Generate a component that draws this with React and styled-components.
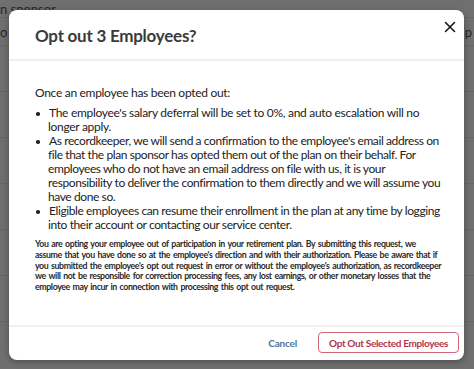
import React from "react"
import styled, { createGlobalStyle } from "styled-components"

const GlobalStyle = createGlobalStyle`
  html, body {
    margin: 0;
    padding: 0;
    background: #6e6e6e;
    font-family: "Lato", "Noto Sans", sans-serif;
  }
  * { box-sizing: border-box; }
`

const Page = styled.div`
  position: relative;
  width: 474px;
  height: 369px;
  overflow: hidden;
  background: #6f6f6f;
`

const Backdrop = styled.div`
  color: #262626;
  font-size: 13px;
  line-height: 14px;
`

const BackRow = styled.div`
  display: flex;
  justify-content: space-between;
  align-items: center;
  height: ${(p) => p.$h || 46}px;
  padding: 0 2px 0 0;
  border-bottom: 1px solid #666;
`

const Overlay = styled.div`
  position: absolute;
  inset: 0;
  padding: 10px 10px 9px 9px;
`

const Modal = styled.div`
  display: flex;
  flex-direction: column;
  height: 100%;
  background: #fff;
  border-radius: 8px;
  box-shadow: 0 2px 6px rgba(0, 0, 0, 0.3);
  overflow: hidden;
`

const Header = styled.div`
  display: flex;
  align-items: flex-start;
  justify-content: space-between;
  padding: 11px 8px 0 26px;
  height: 51px;
  border-bottom: 2px solid #f0f0f0;
`

const Title = styled.h2`
  margin: 5px 0 0;
  font-size: 17px;
  font-weight: 700;
  letter-spacing: -0.25px;
  color: #3b3b3b;
  line-height: 20px;
`

const CloseButton = styled.button`
  border: 0;
  background: none;
  padding: 0;
  width: 12px;
  height: 12px;
  cursor: pointer;
  svg { display: block; }
`

const Body = styled.div`
  flex: 1;
  padding: 25px 19px 0 26px;
  color: #222;
`

const Intro = styled.p`
  margin: 0 0 6px;
  font-size: 12px;
  letter-spacing: -0.3px;
  line-height: 14px;
`

const List = styled.ul`
  margin: 0 0 7px;
  padding: 0;
  list-style: none;
  font-size: 12px;
  line-height: 14px;
`

const Item = styled.li`
  display: flex;
  letter-spacing: ${(p) => p.$ls ?? -0.4}px;
`

const Bullet = styled.span`
  flex: 0 0 13px;
  display: flex;
  align-items: flex-start;
  padding: 6px 0 0 1px;
  &::before {
    content: "";
    width: 3.5px;
    height: 3.5px;
    border-radius: 50%;
    background: #222;
  }
`

const ItemText = styled.span`
  flex: 1;
  & > span { padding-left: 1px; }
`

const Fine = styled.p`
  margin: 0;
  font-size: 8.8px;
  line-height: 10.8px;
  letter-spacing: -0.4px;
  word-spacing: 1px;
  font-weight: 700;
  color: #2a2a2a;
`

const Footer = styled.div`
  display: flex;
  align-items: center;
  justify-content: flex-end;
  gap: 21px;
  height: 35px;
  padding: 0 5px 2px 0;
  border-top: 2px solid #f0f0f0;
`

const TextButton = styled.button`
  border: 0;
  background: none;
  font-family: inherit;
  font-size: 10px;
  font-weight: 700;
  letter-spacing: -0.2px;
  color: #4a76a0;
  padding: 0;
  cursor: pointer;
`

const OutlineButton = styled.button`
  height: 21px;
  padding: 0 10px;
  border: 1px solid #cf6778;
  border-radius: 4px;
  background: #fff;
  font-family: inherit;
  font-size: 10px;
  font-weight: 700;
  letter-spacing: -0.35px;
  color: #b3354a;
  cursor: pointer;
`

const bullets = [
  { text: "The employee's salary deferral will be set to 0%, and auto escalation will no longer apply.", ls: -0.3 },
  { text: "As recordkeeper, we will send a confirmation to the employee's email address on file that the plan sponsor has opted them out of the plan on their behalf. For employees who do not have an email address on file with us, it is your responsibility to deliver the confirmation to them directly and we will assume you have done so." },
  { text: "Eligible employees can resume their enrollment in the plan at any time by logging into their account or contacting our service center." },
]

export default function App() {
  return (
    <Page>
      <GlobalStyle />
      <Backdrop>
        <BackRow $h={18}>n sponsor.</BackRow>
        <BackRow $h={28}>
          <span>o</span>
          <span>p</span>
        </BackRow>
        <BackRow />
        <BackRow />
        <BackRow />
        <BackRow />
        <BackRow />
        <BackRow />
      </Backdrop>
      <Overlay>
        <Modal>
          <Header>
            <Title>Opt out 3 Employees?</Title>
            <CloseButton aria-label="Close">
              <svg width="12" height="12" viewBox="0 0 12 12">
                <path d="M1.5 1.5L10.5 10.5M10.5 1.5L1.5 10.5" stroke="#111" strokeWidth="1.5" strokeLinecap="round" />
              </svg>
            </CloseButton>
          </Header>
          <Body>
            <Intro>Once an employee has been opted out:</Intro>
            <List>
              {bullets.map((b) => (
                <Item key={b.text} $ls={b.ls}>
                  <Bullet />
                  <ItemText>
                    <span>{b.text}</span>
                  </ItemText>
                </Item>
              ))}
            </List>
            <Fine>
              You are opting your employee out of participation in your retirement plan. By submitting this request, we assume that you have done so at the employee's direction and with their authorization. Please be aware that if you submitted the employee's opt out request in error or without the employee's authorization, as recordkeeper we will not be responsible for correction processing fees, any lost earnings, or other monetary losses that the employee may incur in connection with processing this opt out request.
            </Fine>
          </Body>
          <Footer>
            <TextButton>Cancel</TextButton>
            <OutlineButton>Opt Out Selected Employees</OutlineButton>
          </Footer>
        </Modal>
      </Overlay>
    </Page>
  )
}
